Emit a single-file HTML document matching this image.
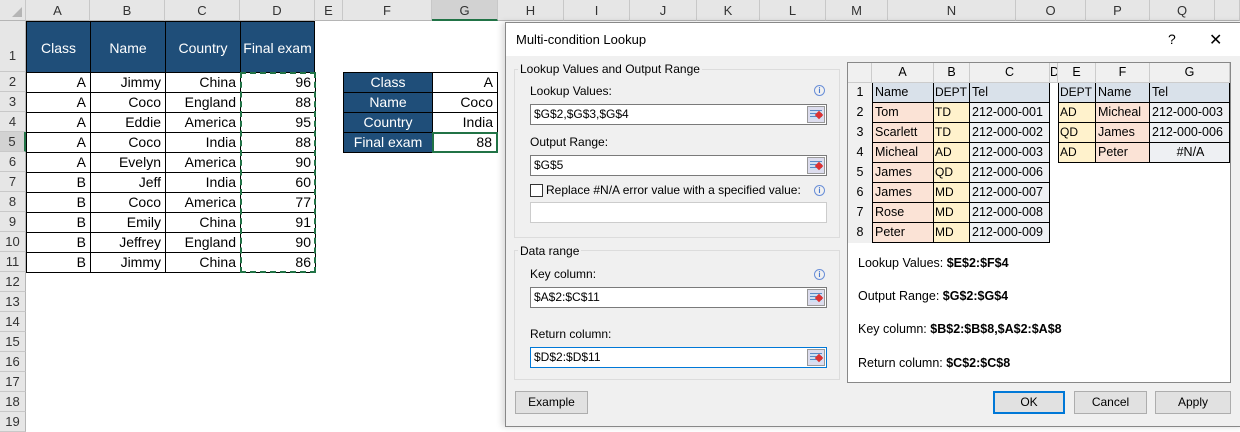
<!DOCTYPE html>
<html><head><meta charset="utf-8"><style>
*{box-sizing:border-box;margin:0;padding:0}
body{width:1240px;height:423px;overflow:hidden;background:#fff;position:relative;font-family:"Liberation Sans",sans-serif;font-size:13px;color:#000;white-space:nowrap}
.a{position:absolute}
.ch{position:absolute;top:0;height:21px;background:#e6e6e6;border-right:1px solid #c8c8c8;border-bottom:1px solid #b5b5b5;text-align:center;line-height:21px;font-size:13px;color:#333}
.rh{position:absolute;left:0;width:26px;background:#e6e6e6;border-bottom:1px solid #c8c8c8;border-right:1px solid #b5b5b5;text-align:center;font-size:13px;color:#333;line-height:20px}
.c{position:absolute;height:21px;border:1px solid #000;text-align:right;padding-right:4px;line-height:19px;font-size:14px}
.hd{background:#1f4e79;color:#fff;text-align:center;padding:0}
.dlg{font-size:12px}
.inp{position:absolute;left:530px;width:297px;height:21px;background:#fff;border:1px solid #7a7a7a;padding-left:3px;line-height:19px;font-size:12px}
.pick{position:absolute;right:1px;top:1px;width:18px;height:17px;background:#dde;border:1px solid #999}
.pick:before{content:"";position:absolute;left:2px;top:3px;width:12px;height:9px;background:repeating-linear-gradient(#5a8ac6 0 1px,#cfe0f3 1px 3px)}
.pick:after{content:"";position:absolute;left:8px;top:5px;width:6px;height:6px;background:#d33;transform:rotate(45deg)}
.info{position:absolute;width:11px;height:11px;border:1px solid #6a8fd8;border-radius:50%;font-size:8px;line-height:9px;text-align:center;color:#4a7ad0;font-weight:bold}
.btn{position:absolute;height:23px;background:#e1e1e1;border:1px solid #adadad;text-align:center;line-height:21px;font-size:12px}
.ic{position:absolute;height:20px;border-right:1px solid #000;border-bottom:1px solid #000;line-height:19px;font-size:12.5px;padding-left:2px;overflow:hidden;white-space:nowrap}
</style></head><body>
<div class="ch" style="left:0;width:26px"></div>
<div class="a" style="left:12px;top:7px;width:0;height:0;border-left:10px solid transparent;border-bottom:10px solid #b5b5b5"></div>
<div class="ch" style="left:26px;width:64px">A</div>
<div class="ch" style="left:90px;width:75px">B</div>
<div class="ch" style="left:165px;width:75px">C</div>
<div class="ch" style="left:240px;width:75px">D</div>
<div class="ch" style="left:315px;width:28px">E</div>
<div class="ch" style="left:343px;width:89px">F</div>
<div class="ch" style="left:432px;width:66px;background:#d2d2d2;border-bottom:2px solid #217346">G</div>
<div class="ch" style="left:498px;width:66px">H</div>
<div class="ch" style="left:564px;width:66px">I</div>
<div class="ch" style="left:630px;width:67px">J</div>
<div class="ch" style="left:697px;width:63px">K</div>
<div class="ch" style="left:760px;width:66px">L</div>
<div class="ch" style="left:826px;width:62px">M</div>
<div class="ch" style="left:888px;width:128px">N</div>
<div class="ch" style="left:1016px;width:70px">O</div>
<div class="ch" style="left:1086px;width:64px">P</div>
<div class="ch" style="left:1150px;width:65px">Q</div>
<div class="ch" style="left:1215px;width:25px"></div>
<div class="rh" style="top:21px;height:51px;line-height:70px">1</div>
<div class="rh" style="top:72px;height:20px">2</div>
<div class="rh" style="top:92px;height:20px">3</div>
<div class="rh" style="top:112px;height:20px">4</div>
<div class="rh" style="top:132px;height:20px;background:#d2d2d2;border-right:2px solid #217346">5</div>
<div class="rh" style="top:152px;height:20px">6</div>
<div class="rh" style="top:172px;height:20px">7</div>
<div class="rh" style="top:192px;height:20px">8</div>
<div class="rh" style="top:212px;height:20px">9</div>
<div class="rh" style="top:232px;height:20px">10</div>
<div class="rh" style="top:252px;height:20px">11</div>
<div class="rh" style="top:272px;height:20px">12</div>
<div class="rh" style="top:292px;height:20px">13</div>
<div class="rh" style="top:312px;height:20px">14</div>
<div class="rh" style="top:332px;height:20px">15</div>
<div class="rh" style="top:352px;height:20px">16</div>
<div class="rh" style="top:372px;height:20px">17</div>
<div class="rh" style="top:392px;height:20px">18</div>
<div class="rh" style="top:412px;height:20px">19</div>
<div class="c hd" style="left:26px;top:21px;width:65px;height:52px;line-height:52px">Class</div>
<div class="c hd" style="left:90px;top:21px;width:76px;height:52px;line-height:52px">Name</div>
<div class="c hd" style="left:165px;top:21px;width:76px;height:52px;line-height:52px">Country</div>
<div class="c hd" style="left:240px;top:21px;width:75px;height:52px;line-height:52px">Final exam</div>
<div id="rows"></div>
<div class="a" style="left:240px;top:72px;width:76px;height:201px;border:2px dashed #217346"></div>
<div class="c hd" style="left:343px;top:72px;width:90px;text-align:center">Class</div>
<div class="c" style="left:432px;top:72px;width:66px">A</div>
<div class="c hd" style="left:343px;top:92px;width:90px;text-align:center">Name</div>
<div class="c" style="left:432px;top:92px;width:66px">Coco</div>
<div class="c hd" style="left:343px;top:112px;width:90px;text-align:center">Country</div>
<div class="c" style="left:432px;top:112px;width:66px">India</div>
<div class="c hd" style="left:343px;top:132px;width:90px;text-align:center">Final exam</div>
<div class="c" style="left:432px;top:132px;width:66px;border:2px solid #217346;line-height:17px">88</div>
<div class="a dlg" style="left:505px;top:22px;width:740px;height:405px;background:#f0f0f0;border:1px solid #888;box-shadow:-3px 0 6px rgba(0,0,0,.15)">
 <div class="a" style="left:0;top:0;width:740px;height:33px;background:#fff"></div>
 <div class="a" style="left:10px;top:9px;font-size:13px">Multi-condition Lookup</div>
 <div class="a" style="left:662px;top:8px;font-size:14px">?</div>
 <div class="a" style="left:703px;top:7px;font-size:16px;font-weight:200">✕</div>
</div>
<div class="a" style="left:514px;top:69px;width:326px;height:169px;border:1px solid #dcdcdc"></div>
<div class="a dlg" style="left:518px;top:62px;background:#f0f0f0;padding:0 2px">Lookup Values and Output Range</div>
<div class="a dlg" style="left:530px;top:84px">Lookup Values:</div>
<div class="info" style="left:814px;top:85px">i</div>
<div class="inp" style="top:104px">$G$2,$G$3,$G$4<div class="pick"></div></div>
<div class="a dlg" style="left:530px;top:135px">Output Range:</div>
<div class="inp" style="top:155px">$G$5<div class="pick"></div></div>
<div class="a" style="left:530px;top:184px;width:13px;height:13px;background:#fff;border:1px solid #333"></div>
<div class="a dlg" style="left:546px;top:183px">Replace #N/A error value with a specified value:</div>
<div class="info" style="left:814px;top:185px">i</div>
<div class="inp" style="top:202px;border-color:#ccc"></div>
<div class="a" style="left:514px;top:250px;width:326px;height:130px;border:1px solid #dcdcdc"></div>
<div class="a dlg" style="left:518px;top:244px;background:#f0f0f0;padding:0 2px">Data range</div>
<div class="a dlg" style="left:530px;top:267px">Key column:</div>
<div class="info" style="left:814px;top:269px">i</div>
<div class="inp" style="top:287px">$A$2:$C$11<div class="pick"></div></div>
<div class="a dlg" style="left:530px;top:327px">Return column:</div>
<div class="inp" style="top:347px;border-color:#0078d7">$D$2:$D$11<div class="pick"></div></div>
<div class="btn" style="left:515px;top:391px;width:73px">Example</div>
<div class="btn" style="left:993px;top:391px;width:72px;border:2px solid #0078d7;line-height:19px">OK</div>
<div class="btn" style="left:1074px;top:391px;width:73px">Cancel</div>
<div class="btn" style="left:1155px;top:391px;width:76px">Apply</div>
<div class="a" style="left:847px;top:62px;width:384px;height:321px;background:#fff;border:1px solid #888"></div>
<div id="pic"></div>
<div class="a dlg" style="left:858px;top:256px;font-size:12.5px">Lookup Values: <b>$E$2:$F$4</b></div>
<div class="a dlg" style="left:858px;top:289px;font-size:12.5px">Output Range: <b>$G$2:$G$4</b></div>
<div class="a dlg" style="left:858px;top:322px;font-size:12.5px">Key column: <b>$B$2:$B$8,$A$2:$A$8</b></div>
<div class="a dlg" style="left:858px;top:356px;font-size:12.5px">Return column: <b>$C$2:$C$8</b></div>
<script>
var d=[["A","Jimmy","China",96],["A","Coco","England",88],["A","Eddie","America",95],["A","Coco","India",88],["A","Evelyn","America",90],["B","Jeff","India",60],["B","Coco","America",77],["B","Emily","China",91],["B","Jeffrey","England",90],["B","Jimmy","China",86]];
var h="",xs=[[26,65],[90,76],[165,76],[240,76]];
d.forEach(function(r,i){var y=72+i*20;r.forEach(function(v,j){h+='<div class="c" style="left:'+xs[j][0]+'px;top:'+y+'px;width:'+xs[j][1]+'px">'+v+'</div>'})});
document.getElementById("rows").innerHTML=h;
var p="",X=[848,872,934,970,1050,1058,1096,1150,1230];
var hdr=["","A","B","C","D","E","F","G"];
for(var k=0;k<8;k++)p+='<div class="ic" style="left:'+X[k]+'px;top:63px;width:'+(X[k+1]-X[k])+'px;background:#f0f0f0;border-color:#ccc;text-align:center;padding:0">'+hdr[k]+'</div>';
var L=[["Name","DEPT","Tel"],["Tom","TD","212-000-001"],["Scarlett","TD","212-000-002"],["Micheal","AD","212-000-003"],["James","QD","212-000-006"],["James","MD","212-000-007"],["Rose","MD","212-000-008"],["Peter","MD","212-000-009"]];
var R=[["DEPT","Name","Tel"],["AD","Micheal","212-000-003"],["QD","James","212-000-006"],["AD","Peter","#N/A"]];
var bg=["#fbe3d6","#fff2cc","#eef0f3"];
L.forEach(function(r,i){var y=83+i*20;p+='<div class="ic" style="left:848px;top:'+y+'px;width:24px;background:#f0f0f0;border:none;text-align:center;padding:0">'+(i+1)+'</div>';
r.forEach(function(v,j){p+='<div class="ic" style="left:'+X[j+1]+'px;top:'+y+'px;width:'+(X[j+2]-X[j+1])+'px;background:'+(i==0?"#d9e1ea":bg[j])+';border-left:'+(j==0?"1px solid #000":"none")+(j==1?";font-size:12px;padding-left:1px":"")+'">'+v+'</div>'})});
R.forEach(function(r,i){var y=83+i*20;r.forEach(function(v,j){var x=X[j+5],w=X[j+6]-x;p+='<div class="ic" style="left:'+x+'px;top:'+y+'px;width:'+w+'px;background:'+(i==0?"#d9e1ea":[bg[1],bg[0],bg[2]][j])+';border-left:'+(j==0?"1px solid #000":"none")+(j==0?";font-size:12px;padding-left:1px":"")+(v=="#N/A"?";text-align:center":"")+'">'+v+'</div>'})});
document.getElementById("pic").innerHTML=p;
</script>
</body></html>
